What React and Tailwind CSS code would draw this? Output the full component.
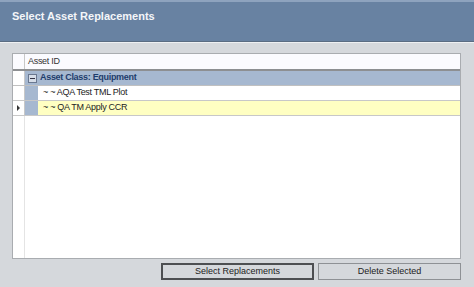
export default function App() {
  const font = { fontFamily: "'Liberation Sans', Arial, sans-serif" };
  return (
    <div className="w-[474px] h-[287px] bg-[#d5d8dc] flex flex-col overflow-hidden" style={font}>
      <div className="h-[42px] bg-[#6882a2] border-t-2 border-[#8ea3be] border-b border-b-[#5a6c82] flex items-start px-[12px] pt-[6px]">
        <span className="text-[#f4f6f9] font-bold text-[11px]">Select Asset Replacements</span>
      </div>
      <div className="h-px bg-[#eef0f2]" />
      <div className="flex-1 flex flex-col pl-[12px] pr-[13px] pt-[10px]">
        <div className="h-[206px] bg-white border border-[#a9acb0] flex flex-col text-[9px] tracking-[-0.3px] text-[#222]">
          <div className="h-[17px] flex bg-[#fbfbff] border-b-2 border-[#8d8f92]">
            <div className="w-[12px] border-r border-[#c8c8c8]" />
            <div className="flex items-center pl-[3px] text-[#333]">Asset ID</div>
          </div>
          <div className="h-[15px] flex bg-[#a6b8d0] border-b border-[#c0c0c0]">
            <div className="w-[12px] bg-white border-r border-[#c8c8c8]" />
            <div className="flex items-center pl-[3px] gap-[3px]">
              <div className="w-[9px] h-[9px] border border-[#6a7890] bg-[#d6dde8] flex items-center justify-center">
                <div className="w-[5px] h-px bg-[#334]" />
              </div>
              <span className="font-bold text-[#1f3d6c]">Asset Class: Equipment</span>
            </div>
          </div>
          <div className="h-[15px] flex bg-white border-b border-[#c8c8c8]">
            <div className="w-[12px] border-r border-[#c8c8c8]" />
            <div className="w-[13px] bg-[#a6b8d0]" />
            <div className="flex items-center pl-[5px] text-[#222]">~ ~ AQA Test TML Plot</div>
          </div>
          <div className="h-[15px] flex bg-[#ffffc2] border-b border-[#c8c8c8]">
            <div className="w-[12px] bg-white border-r border-[#c8c8c8] flex items-center justify-center">
              <div className="w-0 h-0 border-y-[3px] border-y-transparent border-l-[3px] border-l-[#333]" />
            </div>
            <div className="w-[13px] bg-[#a6b8d0]" />
            <div className="flex items-center pl-[5px] text-[#222]">~ ~ QA TM Apply CCR</div>
          </div>
          <div className="flex-1 flex">
            <div className="w-[12px] border-r border-[#e4e4e4]" />
          </div>
        </div>
        <div className="flex justify-end gap-[4px] mt-[4px]">
          <button className="w-[153px] h-[17px] bg-[#d5d8dc] border-2 border-[#4d4f52] text-[9px] text-[#222]">
            Select Replacements
          </button>
          <button className="w-[143px] h-[17px] bg-[#d5d8dc] border border-[#8e9195] text-[9px] text-[#222]">
            Delete Selected
          </button>
        </div>
      </div>
    </div>
  );
}
